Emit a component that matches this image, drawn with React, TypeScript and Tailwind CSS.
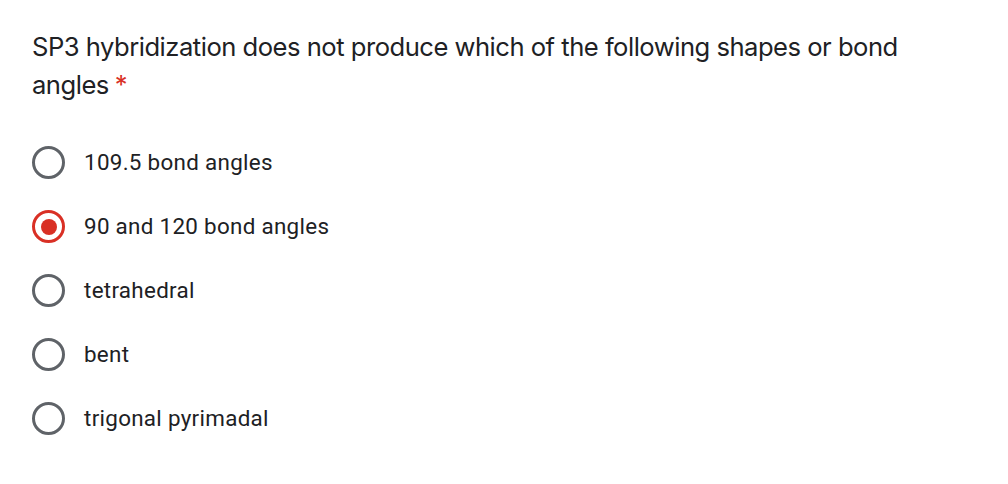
import React, { useState } from 'react';

const options = [
  '109.5 bond angles',
  '90 and 120 bond angles',
  'tetrahedral',
  'bent',
  'trigonal pyrimadal',
];

export default function App() {
  const [selected, setSelected] = useState(1);

  return (
    <div className="w-[1008px] h-[484px] bg-white px-[32px] pt-[28px]">
      <div
        className="text-[25.6px] leading-[38.4px] text-[#202124] tracking-[-0.5px]"
        style={{ fontFamily: 'Inter, "Open Sans", sans-serif' }}
      >
        SP3 hybridization does not produce which of the following shapes or bond angles
        <span className="text-[#d93025] ml-[6px]">*</span>
      </div>

      <div className="mt-[26px] flex flex-col">
        {options.map((opt, i) => (
          <label
            key={opt}
            onClick={() => setSelected(i)}
            className="flex items-center h-[64px] cursor-pointer"
          >
            {selected === i ? (
              <span className="w-[33px] h-[33px] rounded-full border-[3.5px] border-[#d93025] flex items-center justify-center shrink-0">
                <span className="w-[16px] h-[16px] rounded-full bg-[#d93025]" />
              </span>
            ) : (
              <span className="w-[33px] h-[33px] rounded-full border-[3.5px] border-[#5f6368] shrink-0" />
            )}
            <span
              className="ml-[19px] text-[22.4px] text-[#202124] tracking-[0.3px]"
              style={{ fontFamily: 'Roboto, sans-serif' }}
            >
              {opt}
            </span>
          </label>
        ))}
      </div>
    </div>
  );
}
